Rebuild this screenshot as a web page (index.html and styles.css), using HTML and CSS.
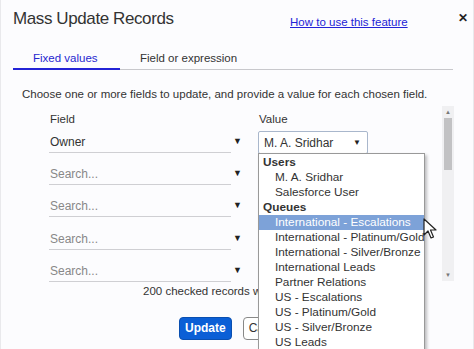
FILE: index.html
```html
<!DOCTYPE html>
<html lang="en">
<head>
    <meta charset="UTF-8">
    <meta name="viewport" content="width=device-width, initial-scale=1.0">
    <title>Mass Update Records</title>
    <link rel="stylesheet" href="styles.css">
</head>
<body>
    <div class="dialog">
        <div class="header">
            <h1>Mass Update Records</h1>
            <a href="#" class="help-link">How to use this feature</a>
            <span class="close">&#x2715;</span>
        </div>

        <div class="tabs">
            <span class="tab active">Fixed values</span>
            <span class="tab">Field or expression</span>
        </div>

        <p class="intro">Choose one or more fields to update, and provide a value for each chosen field.</p>

        <div class="form-area">
            <div class="rows">
                <div class="labels">
                    <span class="label-field">Field</span>
                    <span>Value</span>
                </div>

                <div class="row">
                    <div class="field-input">Owner</div>
                    <span class="arrow">&#9660;</span>
                    <div class="value-select">
                        <span>M. A. Sridhar</span>
                        <span class="arrow">&#9660;</span>
                        <div class="menu">
                            <div class="group">Users</div>
                            <div class="option">M. A. Sridhar</div>
                            <div class="option">Salesforce User</div>
                            <div class="group">Queues</div>
                            <div class="option selected">International - Escalations</div>
                            <div class="option">International - Platinum/Gold</div>
                            <div class="option">International - Silver/Bronze</div>
                            <div class="option">International Leads</div>
                            <div class="option">Partner Relations</div>
                            <div class="option">US - Escalations</div>
                            <div class="option">US - Platinum/Gold</div>
                            <div class="option">US - Silver/Bronze</div>
                            <div class="option">US Leads</div>
                        </div>
                    </div>
                </div>
                <div class="row">
                    <div class="field-input placeholder">Search...</div>
                    <span class="arrow">&#9660;</span>
                </div>
                <div class="row">
                    <div class="field-input placeholder">Search...</div>
                    <span class="arrow">&#9660;</span>
                </div>
                <div class="row">
                    <div class="field-input placeholder">Search...</div>
                    <span class="arrow">&#9660;</span>
                </div>
                <div class="row last">
                    <div class="field-input placeholder">Search...</div>
                    <span class="arrow">&#9660;</span>
                </div>
            </div>

            <div class="scrollbar">
                <span class="scroll-arrow">&#9650;</span>
                <div class="track"><div class="thumb"></div></div>
                <span class="scroll-arrow">&#9660;</span>
            </div>
        </div>

        <p class="count">200 checked records will be updated.</p>

        <div class="actions">
            <button class="btn primary">Update</button>
            <button class="btn">Cancel</button>
        </div>

        <svg class="cursor" width="14" height="22" viewBox="0 0 14 22">
            <path d="M1 1 L1 17 L5 13 L8 20 L10.5 19 L7.5 12 L13 12 Z" fill="#fff" stroke="#222" stroke-width="1.2" stroke-linejoin="round"/>
        </svg>
    </div>
</body>
</html>
```

FILE: styles.css
```css
body {
    margin: 0;
    padding: 0;
    font-family: "Liberation Sans", Arial, sans-serif;
    color: #333;
    background-color: #e9e9ec;
}

.dialog {
    position: relative;
    width: 472px;
    height: 349px;
    margin-left: 1px;
    background-color: #fcfcfe;
    overflow: hidden;
}

.header {
    display: flex;
    align-items: flex-start;
    padding: 9px 0 0 12px;
    height: 31px;
}

.header h1 {
    margin: 0;
    font-size: 17px;
    letter-spacing: -0.4px;
    font-weight: normal;
    color: #333;
    width: 277px;
}

.help-link {
    margin-top: 7px;
    font-size: 11.5px;
    color: #2323d6;
}

.close {
    margin: 2px 0 0 50px;
    font-size: 12px;
    font-weight: bold;
    color: #222;
}

.tabs {
    display: flex;
    margin: 9px 20px 0 12px;
    border-bottom: 1px solid #c8c8cc;
    font-size: 11.5px;
}

.tab {
    padding: 3px 20px 4px 20px;
}

.tab.active {
    width: 67px;
    color: #2727d0;
    border-bottom: 2px solid #2323d6;
    margin-bottom: -1px;
}

.intro {
    margin: 18px 0 0 21px;
    font-size: 11.5px;
}

.form-area {
    display: flex;
    margin-top: 6px;
}

.rows {
    width: 392px;
    padding-left: 48px;
    padding-top: 7px;
}

.labels {
    display: flex;
    font-size: 11.5px;
    padding-left: 1px;
    height: 19px;
}

.label-field {
    width: 209px;
}

.row {
    display: flex;
    align-items: flex-start;
    height: 32.2px;
}

.row.last {
    height: 23px;
}

.field-input {
    width: 181px;
    height: 20px;
    line-height: 20px;
    padding-left: 1px;
    font-size: 12px;
    border-bottom: 1px solid #cfcfd3;
}

.placeholder {
    color: #888;
}

.row > .arrow {
    margin: 4px 0 0 2px;
    font-size: 9px;
    color: #222;
    width: 25px;
}

.value-select {
    position: relative;
    display: flex;
    justify-content: space-between;
    align-items: center;
    width: 97px;
    height: 21px;
    margin-top: -1px;
    padding: 0 6px 0 5px;
    border: 1px solid #a9b7cc;
    border-radius: 2px;
    background-color: #fff;
    font-size: 12px;
}

.value-select .arrow {
    font-size: 8px;
    color: #222;
}

.menu {
    position: absolute;
    top: 21px;
    left: -1px;
    width: 165px;
    padding-top: 1px;
    border: 1px solid #999;
    background-color: #fff;
    box-shadow: 2px 2px 3px rgba(0, 0, 0, 0.25);
    font-size: 11.8px;
    color: #333;
}

.group {
    height: 15px;
    line-height: 15px;
    padding-left: 4px;
    font-weight: bold;
}

.option {
    height: 15px;
    line-height: 15px;
    padding-left: 16px;
    white-space: nowrap;
}

.option.selected {
    background-color: #7da2d8;
    color: #fff;
}

.scrollbar {
    display: flex;
    flex-direction: column;
    align-items: center;
    width: 12px;
    height: 175px;
    margin-left: 1px;
    background-color: #f0f0f2;
}

.scroll-arrow {
    font-size: 6px;
    color: #777;
    height: 12px;
    line-height: 12px;
}

.track {
    flex: 1;
    width: 8px;
}

.thumb {
    height: 52px;
    background-color: #c2c2c4;
}

.count {
    margin: 1px 0 0 142px;
    font-size: 11.5px;
    white-space: nowrap;
}

.actions {
    display: flex;
    gap: 11px;
    margin: 20px 0 0 178px;
}

.btn {
    height: 23px;
    padding: 0 5px;
    border: 1px solid #888;
    border-radius: 4px;
    background-color: #fff;
    font-family: "Liberation Sans", Arial, sans-serif;
    font-size: 12px;
    color: #333;
}

.btn.primary {
    background-color: #0b5fd6;
    border-color: #0a4fb0;
    color: #fff;
    font-weight: bold;
}

.cursor {
    position: absolute;
    left: 422px;
    top: 218px;
}
```
